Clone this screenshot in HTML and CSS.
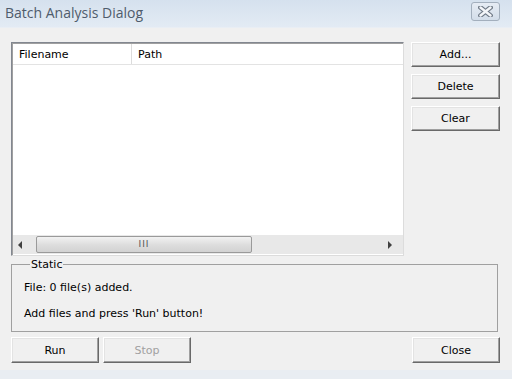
FILE: index.html
```html
<!DOCTYPE html>
<html lang="en">
  <head>
    <meta charset="UTF-8" />
    <title>Batch Analysis Dialog</title>
    <link rel="stylesheet" href="styles.css">
  </head>
  <body>
    <div class="window">
      <div class="titlebar">
        <span class="title">Batch Analysis Dialog</span>
        <span class="close-x">
          <svg width="15" height="11" viewBox="0 0 15 11">
            <path d="M2.5 1.5 L12.5 9.5 M12.5 1.5 L2.5 9.5" stroke="#6f7986" stroke-width="4.8" stroke-linecap="round"/>
            <path d="M2.5 1.5 L12.5 9.5 M12.5 1.5 L2.5 9.5" stroke="#f4f6f9" stroke-width="2.4" stroke-linecap="round"/>
          </svg>
        </span>
      </div>

      <div class="content">
        <div class="top-row">
          <div class="listview">
            <div class="lv-header">
              <div class="col col-name">Filename</div>
              <div class="col col-path">Path</div>
            </div>
            <div class="lv-body"></div>
            <div class="hscroll">
              <span class="arrow arrow-left"></span>
              <div class="track">
                <div class="thumb"><span class="grip">III</span></div>
              </div>
              <span class="arrow arrow-right"></span>
            </div>
          </div>
          <div class="side-buttons">
            <button class="btn">Add...</button>
            <button class="btn">Delete</button>
            <button class="btn">Clear</button>
          </div>
        </div>

        <fieldset class="group">
          <legend>Static</legend>
          <p>File: 0 file(s) added.</p>
          <p>Add files and press 'Run' button!</p>
        </fieldset>

        <div class="bottom-row">
          <button class="btn">Run</button>
          <button class="btn disabled">Stop</button>
          <span class="spacer"></span>
          <button class="btn">Close</button>
        </div>
      </div>
      <div class="footer"></div>
    </div>
  </body>
</html>
```

FILE: styles.css
```css
body {
  margin: 0;
  background: #f0f0f0;
  font-family: Tahoma, "DejaVu Sans", "Liberation Sans", sans-serif;
  font-size: 11px;
  color: #000;
}
.window {
  width: 512px;
  height: 379px;
  display: flex;
  flex-direction: column;
}
.titlebar {
  height: 28px;
  display: flex;
  align-items: center;
  justify-content: space-between;
  padding: 0 12px 0 5px;
  background: linear-gradient(#d5e1ee, #e3ebf4);
  border-bottom: 1px solid #e9eef4;
  box-sizing: border-box;
}
.title {
  font-family: "Open Sans", "Noto Sans", sans-serif;
  font-size: 14px;
  color: #4f5c6c;
  margin-top: -3px;
}
.close-x {
  width: 29px;
  height: 19px;
  margin-top: -4px;
  box-sizing: border-box;
  border: 1px solid #a3afbd;
  border-radius: 3px;
  background: linear-gradient(#e6ecf4, #d3dde9);
  display: flex;
  align-items: center;
  justify-content: center;
}
.content {
  flex: 1;
  padding: 14px 12px 0 11px;
}
.top-row {
  display: flex;
  gap: 7px;
}
.listview {
  width: 394px;
  height: 214px;
  box-sizing: border-box;
  border: 1px solid #828790;
  border-right-color: #dcdcdc;
  border-bottom-color: #dcdcdc;
  box-shadow: inset 1px 1px 0 #a0a0a0;
  background: #fff;
  display: flex;
  flex-direction: column;
}
.lv-header {
  display: flex;
  height: 20px;
  background: #fff;
  border-bottom: 1px solid #e3e3e3;
  border-top: 1px solid #a0a0a0;
  margin-left: 1px;
}
.col {
  padding: 4px 0 0 6px;
  border-right: 1px solid #dcdcdc;
  box-sizing: border-box;
}
.col-name {
  width: 119px;
}
.col-path {
  flex: 1;
  border-right: none;
}
.lv-body {
  flex: 1;
}
.hscroll {
  height: 19px;
  display: flex;
  align-items: center;
  background: #e8e8e8;
  margin: 0 0 1px 1px;
  padding: 0 2px;
}
.arrow {
  width: 0;
  height: 0;
  border-top: 4px solid transparent;
  border-bottom: 4px solid transparent;
}
.arrow-left {
  border-right: 4px solid #404040;
  margin: 0 14px 0 3px;
}
.arrow-right {
  border-left: 4px solid #404040;
  margin: 0 9px 0 0;
}
.track {
  flex: 1;
  height: 17px;
}
.thumb {
  width: 216px;
  height: 17px;
  box-sizing: border-box;
  border: 1px solid #9a9a9a;
  border-radius: 2px;
  background: linear-gradient(#f2f2f2, #dedede 50%, #d2d2d2);
  text-align: center;
  font-size: 9px;
  line-height: 15px;
  color: #555;
}
.grip {
  letter-spacing: 1px;
}
.side-buttons {
  display: flex;
  flex-direction: column;
  gap: 7px;
}
.btn {
  width: 89px;
  height: 25px;
  box-sizing: border-box;
  font-family: inherit;
  font-size: 11px;
  color: #000;
  background: #f0f0f0;
  border: 1px solid;
  border-color: #fff #696969 #696969 #fff;
  box-shadow: inset -1px -1px 0 #a0a0a0, inset 1px 1px 0 #e3e3e3;
  padding: 0;
}
.btn.disabled {
  color: #a0a0a0;
}
.group {
  margin: 2px 0 0 0;
  width: 487px;
  height: 74px;
  box-sizing: border-box;
  border: 1px solid #a0a0a0;
  padding: 0 12px;
}
.group legend {
  padding: 0 1px;
  margin-left: 6px;
}
.group p {
  margin: 10px 0 0 0;
  line-height: 14px;
}
.group p + p {
  margin-top: 12px;
}
.bottom-row {
  display: flex;
  gap: 4px;
  margin-top: 5px;
  width: 489px;
}
.spacer {
  flex: 1;
}
.bottom-row .btn {
  width: 88px;
  height: 26px;
}
.footer {
  height: 9px;
  background: #e9edf2;
}
```
